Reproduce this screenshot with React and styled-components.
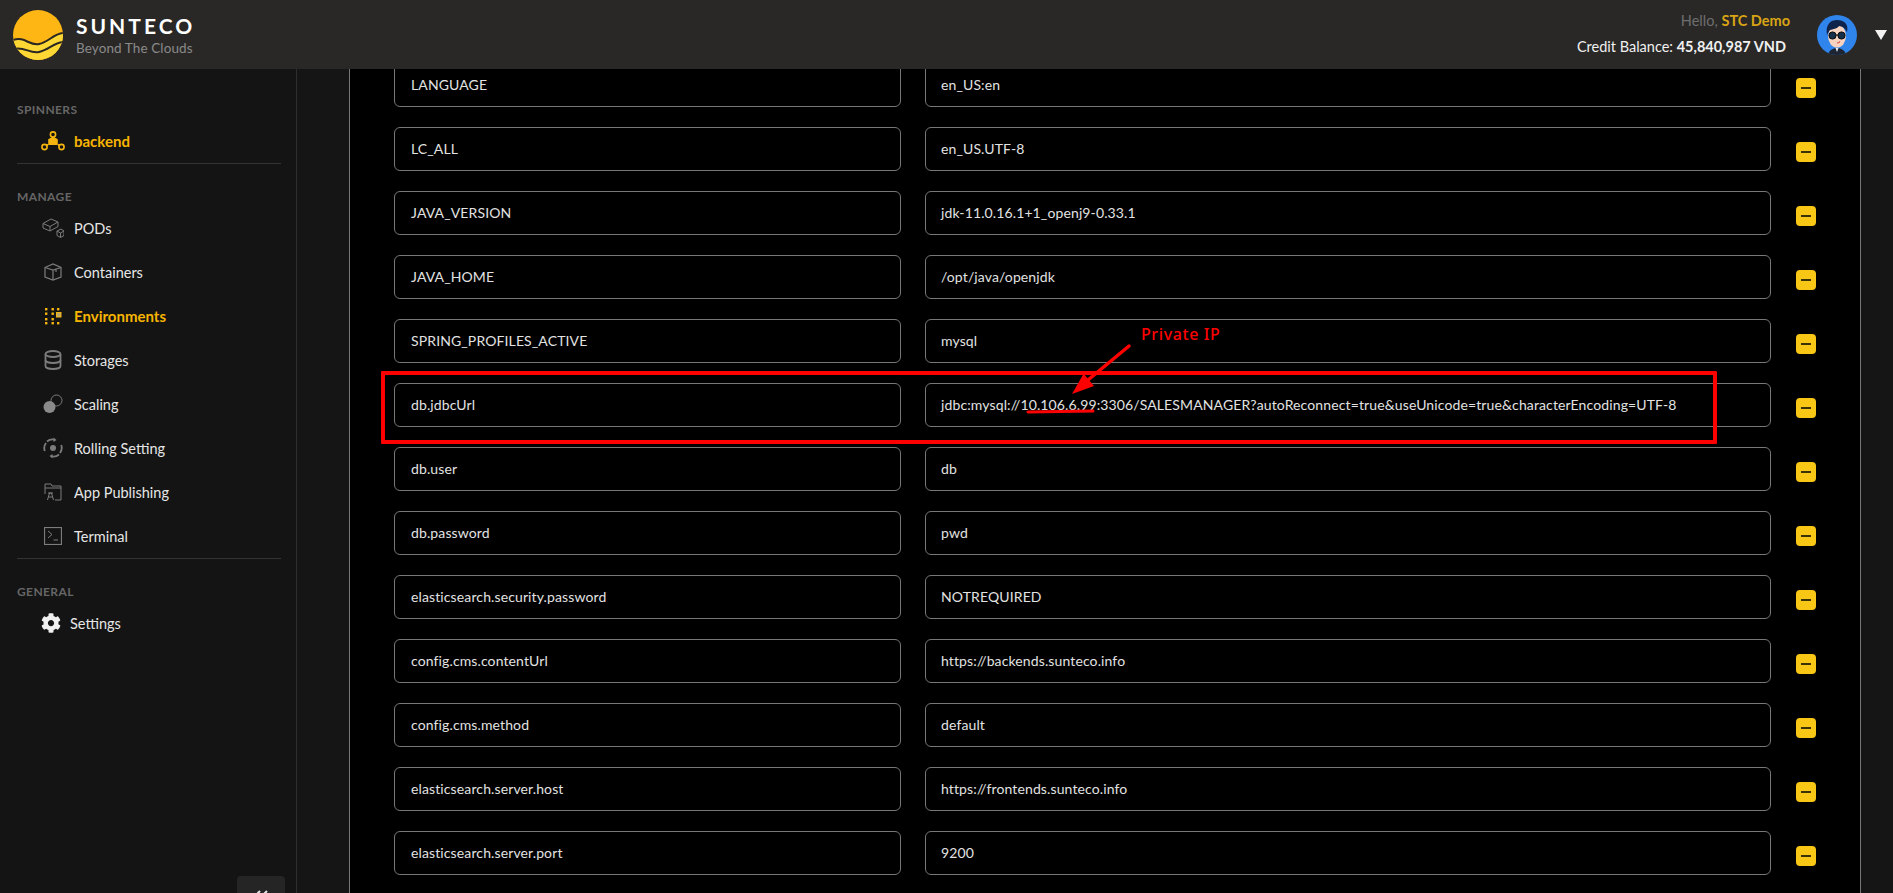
import styled, { createGlobalStyle } from "styled-components";
import { FaCog } from "react-icons/fa";

const GlobalStyle = createGlobalStyle`
  html, body {
    margin: 0;
    height: 100%;
    background: #151515;
    font-family: "Lato", "Noto Sans", sans-serif;
  }
  * {
    box-sizing: border-box;
  }
`;

const Page = styled.div`
  display: flex;
  flex-direction: column;
  height: 100vh;
  overflow: hidden;
`;

// Header
const TopBar = styled.header`
  display: flex;
  align-items: center;
  justify-content: space-between;
  flex: 0 0 69px;
  padding: 0 6px 0 13px;
  background: #292827;
`;

const Brand = styled.div`
  display: flex;
  align-items: center;
  gap: 13px;
`;

const BrandText = styled.div`
  display: flex;
  flex-direction: column;
`;

const BrandName = styled.div`
  font-size: 21px;
  line-height: 26px;
  font-weight: 700;
  letter-spacing: 3px;
  color: #fff;
`;

const BrandSlogan = styled.div`
  font-size: 13.5px;
  line-height: 18px;
  letter-spacing: 0.1px;
  color: #8a8a8a;
`;

const UserArea = styled.div`
  display: flex;
  align-items: center;
`;

const UserText = styled.div`
  display: flex;
  flex-direction: column;
  align-items: flex-end;
  gap: 8px;
  margin: 0 31px 1px 0;
  font-size: 14.5px;
  line-height: 18px;
`;

const Hello = styled.div`
  margin-right: -4px;
  color: #6e6e6e;
`;

const UserName = styled.span`
  color: #d9a514;
  font-weight: 700;
`;

const Credit = styled.div`
  color: #f0f0f0;
`;

const CreditValue = styled.b`
  font-weight: 700;
`;

const Caret = styled.div`
  width: 0;
  height: 0;
  margin-left: 18px;
  border-left: 6.5px solid transparent;
  border-right: 6.5px solid transparent;
  border-top: 10px solid #f2f2f2;
`;

// Sidebar
const Body = styled.div`
  display: flex;
  flex: 1;
  min-height: 0;
`;

const Sidebar = styled.aside`
  display: flex;
  flex-direction: column;
  flex: 0 0 297px;
  padding: 33px 15px 0 17px;
  background: #141414;
  border-right: 1px solid #2e2e2e;
`;

const SectionLabel = styled.div`
  font-size: 12px;
  line-height: 16px;
  font-weight: 700;
  letter-spacing: 0.4px;
  color: #666;
`;

const NavList = styled.nav`
  display: flex;
  flex-direction: column;
  margin-top: 1px;
`;

const NavItem = styled.div`
  display: flex;
  align-items: center;
  height: 44px;
  padding-left: 24px;
  gap: 9px;
  font-size: ${(p) => (p.$active ? "15px" : "14.5px")};
  font-weight: ${(p) => (p.$active ? 700 : 400)};
  color: ${(p) => (p.$active ? "#f8b400" : "#e6e6e6")};
`;

const NavIcon = styled.span`
  display: flex;
  align-items: center;
  justify-content: center;
  width: 24px;
  height: 24px;
  color: ${(p) => (p.$active ? "#f5b50f" : "#7c7c7c")};
`;

const SettingsIcon = styled(NavIcon)`
  width: 20px;
  color: #f0f0f0;
`;

const Divider = styled.div`
  height: 1px;
  margin: ${(p) => p.$margin || "0"};
  background: #333;
`;

const CollapseButton = styled.div`
  display: flex;
  justify-content: center;
  align-self: flex-end;
  margin-top: auto;
  margin-right: -4px;
  padding-top: 14px;
  width: 48px;
  height: 17px;
  overflow: hidden;
  border-radius: 4px 4px 0 0;
  background: #252525;
  color: #e8e8e8;
`;

// Content
const Content = styled.main`
  flex: 1;
  min-width: 0;
  padding: 0 32px 0 52px;
  background: #151515;
`;

const Panel = styled.section`
  position: relative;
  height: 100%;
  overflow: hidden;
  padding-left: 44px;
  background: #000;
  border-left: 1px solid #777;
  border-right: 1px solid #777;
`;

const RowList = styled.div`
  display: flex;
  flex-direction: column;
  gap: 20px;
  margin-top: -6px;
`;

const Row = styled.div`
  display: grid;
  grid-template-columns: 507px 846px 20px;
  column-gap: 24px;
`;

const Field = styled.div`
  display: flex;
  align-items: center;
  height: 44px;
  padding: 0 15px 2px;
  border: 1px solid #777;
  border-radius: 6px;
  font-size: 14px;
  letter-spacing: 0.12px;
  color: #e2e2e2;
  white-space: nowrap;
`;

const NameField = styled(Field)`
  padding-left: 16px;
`;

const RemoveButton = styled.button`
  display: flex;
  align-items: center;
  justify-content: center;
  align-self: center;
  width: 20px;
  height: 20px;
  margin: 5px 0 0 1px;
  padding: 0;
  border: 0;
  border-radius: 4px;
  background: #f8c715;
`;

const RemoveBar = styled.span`
  width: 10px;
  height: 2px;
  background: #3a3205;
`;

const HighlightBox = styled.div`
  position: absolute;
  left: 31px;
  top: 302px;
  width: 1336px;
  height: 73px;
  border: 4px solid #f00;
  border-radius: 1px;
  pointer-events: none;
`;

const Marks = styled.svg`
  position: absolute;
  left: 660px;
  top: 260px;
  pointer-events: none;
`;

const MarkLabel = styled.div`
  position: absolute;
  left: 791px;
  top: 254px;
  font-family: "Noto Sans", sans-serif;
  font-size: 16px;
  line-height: 22px;
  font-weight: 500;
  letter-spacing: 0.6px;
  color: #f00;
`;

const Logo = () => (
  <svg width="50" height="50" viewBox="0 0 50 50">
    <defs>
      <clipPath id="sun">
        <circle cx="25" cy="25" r="25" />
      </clipPath>
    </defs>
    <g clipPath="url(#sun)">
      <rect width="50" height="50" fill="#fdb614" />
      <path d="M0 30C12 26 16 36 26 34S40 24 50 23V50H0Z" fill="#fdd835" />
      <path d="M0 30C12 26 16 36 26 34S40 24 50 23" fill="none" stroke="#2b2722" strokeWidth="2" />
      <path d="M0 39C12 36 16 44 26 42S40 33 50 32" fill="none" stroke="#2b2722" strokeWidth="2" />
    </g>
  </svg>
);

const Avatar = () => (
  <svg width="40" height="40" viewBox="0 0 40 40">
    <defs>
      <clipPath id="avatar">
        <circle cx="20" cy="20" r="20" />
      </clipPath>
    </defs>
    <g clipPath="url(#avatar)">
      <rect width="40" height="40" fill="#2f85ec" />
      <path d="M11 40c1-5 5-7 9-7s8 2 9 7Z" fill="#1d2533" />
      <path d="M18.500 33h3l-1.500 4Z" fill="#e9eef5" />
      <ellipse cx="20" cy="21" rx="9" ry="11.500" fill="#f7d3c0" />
      <path d="M10 20C8 9 14 5 20 5c7 0 12 4 10 12-2-4-5-6-8-6-2 3-6 3-9 4-1 1-2 3-3 5Z" fill="#10234a" />
      <circle cx="15.500" cy="20.500" r="3.600" fill="#16304a" stroke="#0a0a0a" />
      <circle cx="24.500" cy="20.500" r="3.600" fill="#16304a" stroke="#0a0a0a" />
      <path d="M19 20h2" stroke="#0a0a0a" />
      <path d="M20 28c1.500 0 2.500-.5 3-1.500" fill="none" stroke="#d8423f" strokeWidth="1.200" />
    </g>
  </svg>
);

const BackendIcon = () => (
  <svg width="24" height="20" viewBox="0 0 24 20" fill="none" stroke="currentColor" strokeWidth="1.600">
    <path d="M12 6.500l4 2.300v4.500H8V8.800Z" fill="currentColor" />
    <circle cx="12" cy="3.500" r="2.600" />
    <circle cx="3.500" cy="16" r="2.600" />
    <circle cx="20.500" cy="16" r="2.600" />
    <path d="M7 13.500l-1.500 1M17 13.500l1.500 1" />
  </svg>
);

const PodsIcon = () => (
  <svg width="22" height="22" viewBox="0 0 22 22" fill="none" stroke="currentColor" strokeWidth="1">
    <path d="M1 6.500L9 2l7 3v4.500L8 14l-7-3Z" />
    <path d="M1 6.500L8 9.500l8-4.500M8 9.500V14" />
    <path d="M15 14l4-2 3 2v4.500l-3.500 2-3.500-2Z" />
    <path d="M15 14l3.500 2 3.500-2M18.500 16v4.500" />
  </svg>
);

const ContainerIcon = () => (
  <svg width="18" height="18" viewBox="0 0 18 18" fill="none" stroke="currentColor" strokeWidth="1.200">
    <path d="M1 4.500L9 1l8 3.500v9.500L9 17l-8-3Z" />
    <path d="M1 4.500L9 7l8-2.500M9 7v10M12 6v3" />
  </svg>
);

const EnvIcon = () => (
  <svg width="18" height="18" viewBox="0 0 18 18" fill="currentColor">
    <rect x="1" y="1" width="2.400" height="2.400" />
    <rect x="7.500" y="1" width="2.400" height="2.400" />
    <rect x="13" y="1" width="2.400" height="2.400" />
    <rect x="1" y="5.500" width="2.400" height="2.400" />
    <rect x="7.500" y="5.500" width="2.400" height="2.400" />
    <rect x="12.500" y="5.500" width="4.500" height="4.500" fill="#b9a76a" stroke="currentColor" strokeWidth="1" />
    <rect x="1" y="11" width="2.400" height="2.400" />
    <rect x="7.500" y="11" width="2.400" height="2.400" />
    <rect x="1" y="15" width="2.400" height="2.400" />
    <rect x="7.500" y="15" width="2.400" height="2.400" />
    <rect x="13" y="15" width="2.400" height="2.400" />
  </svg>
);

const StorageIcon = () => (
  <svg width="18" height="20" viewBox="0 0 18 20" fill="none" stroke="currentColor" strokeWidth="1.800">
    <ellipse cx="9" cy="4" rx="7.500" ry="3" />
    <path d="M1.500 4v12c0 1.700 3.400 3 7.500 3s7.500-1.300 7.500-3V4" />
    <path d="M1.500 10c0 1.700 3.400 3 7.500 3s7.500-1.300 7.500-3" />
  </svg>
);

const ScalingIcon = () => (
  <svg width="20" height="20" viewBox="0 0 20 20">
    <circle cx="13.500" cy="6.500" r="5.500" fill="none" stroke="currentColor" strokeWidth="1" />
    <circle cx="6.500" cy="13" r="6" fill="#8a8a8a" />
  </svg>
);

const RollingIcon = () => (
  <svg width="20" height="22" viewBox="0 0 20 22" fill="none" stroke="currentColor" strokeWidth="1.800">
    <path d="M4 4.500A8.500 8.500 0 0 1 12 2.800M16 17.500A8.500 8.500 0 0 1 8 19.200" />
    <path d="M1.800 14A8.500 8.500 0 0 1 3 6M18.200 8A8.500 8.500 0 0 1 17 16" />
    <path d="M10.500 0.500l3 2.400-3 2zM9.500 21.500l-3-2.400 3-2z" fill="currentColor" stroke="none" />
    <circle cx="10" cy="11" r="3" fill="currentColor" stroke="none" />
  </svg>
);

const PublishIcon = () => (
  <svg width="18" height="18" viewBox="0 0 18 18" fill="none" stroke="currentColor" strokeWidth="1">
    <path d="M1 11V1h6l1 2h9v14h-6M1 5h16" />
    <path d="M3.500 17l2-7h2l2 7M4.500 14h4M4 10h5" />
  </svg>
);

const TerminalIcon = () => (
  <svg width="18" height="18" viewBox="0 0 18 18" fill="none" stroke="currentColor" strokeWidth="1">
    <rect x="0.500" y="0.500" width="17" height="17" strokeWidth="1.200" />
    <path d="M4 4l4 3.500L4 11M9.500 13H14" />
  </svg>
);

const CollapseIcon = () => (
  <svg width="14" height="12" viewBox="0 0 14 12" fill="none" stroke="currentColor" strokeWidth="2" style={{ flex: "none" }}>
    <path d="M6 1L1 6l5 5M13 1L8 6l5 5" />
  </svg>
);

const envRows = [
  ["LANGUAGE", "en_US:en"],
  ["LC_ALL", "en_US.UTF-8"],
  ["JAVA_VERSION", "jdk-11.0.16.1+1_openj9-0.33.1"],
  ["JAVA_HOME", "/opt/java/openjdk"],
  ["SPRING_PROFILES_ACTIVE", "mysql"],
  ["db.jdbcUrl", "jdbc:mysql://10.106.6.99:3306/SALESMANAGER?autoReconnect=true&useUnicode=true&characterEncoding=UTF-8"],
  ["db.user", "db"],
  ["db.password", "pwd"],
  ["elasticsearch.security.password", "NOTREQUIRED"],
  ["config.cms.contentUrl", "https://backends.sunteco.info"],
  ["config.cms.method", "default"],
  ["elasticsearch.server.host", "https://frontends.sunteco.info"],
  ["elasticsearch.server.port", "9200"],
];

const manageItems = [
  { label: "PODs", icon: <PodsIcon /> },
  { label: "Containers", icon: <ContainerIcon /> },
  { label: "Environments", icon: <EnvIcon />, active: true },
  { label: "Storages", icon: <StorageIcon /> },
  { label: "Scaling", icon: <ScalingIcon /> },
  { label: "Rolling Setting", icon: <RollingIcon /> },
  { label: "App Publishing", icon: <PublishIcon /> },
  { label: "Terminal", icon: <TerminalIcon /> },
];

export default function App() {
  return (
    <Page>
      <GlobalStyle />
      <TopBar>
        <Brand>
          <Logo />
          <BrandText>
            <BrandName>SUNTECO</BrandName>
            <BrandSlogan>Beyond The Clouds</BrandSlogan>
          </BrandText>
        </Brand>
        <UserArea>
          <UserText>
            <Hello>
              Hello, <UserName>STC Demo</UserName>
            </Hello>
            <Credit>
              Credit Balance: <CreditValue>45,840,987 VND</CreditValue>
            </Credit>
          </UserText>
          <Avatar />
          <Caret />
        </UserArea>
      </TopBar>
      <Body>
        <Sidebar>
          <SectionLabel>SPINNERS</SectionLabel>
          <NavList>
            <NavItem $active>
              <NavIcon $active>
                <BackendIcon />
              </NavIcon>
              backend
            </NavItem>
          </NavList>
          <Divider $margin="0 0 25px" />
          <SectionLabel>MANAGE</SectionLabel>
          <NavList>
            {manageItems.map((item) => (
              <NavItem key={item.label} $active={item.active}>
                <NavIcon $active={item.active}>{item.icon}</NavIcon>
                {item.label}
              </NavItem>
            ))}
          </NavList>
          <Divider $margin="0 0 25px" />
          <SectionLabel>GENERAL</SectionLabel>
          <NavList>
            <NavItem>
              <SettingsIcon>
                <FaCog size={20} />
              </SettingsIcon>
              Settings
            </NavItem>
          </NavList>
          <CollapseButton>
            <CollapseIcon />
          </CollapseButton>
        </Sidebar>
        <Content>
          <Panel>
            <RowList>
              {envRows.map(([name, value]) => (
                <Row key={name}>
                  <NameField>{name}</NameField>
                  <Field>{value}</Field>
                  <RemoveButton type="button" aria-label="Remove">
                    <RemoveBar />
                  </RemoveButton>
                </Row>
              ))}
            </RowList>
            <HighlightBox />
            <Marks width="180" height="90" viewBox="0 0 180 90">
              <path d="M18 83L83 82" stroke="#f00" strokeWidth="3" strokeLinecap="round" />
              <path d="M119 17L78 51" stroke="#f00" strokeWidth="3.500" strokeLinecap="round" />
              <path d="M62 65L84 57L73.600 44.700Z" fill="#f00" />
            </Marks>
            <MarkLabel>Private IP</MarkLabel>
          </Panel>
        </Content>
      </Body>
    </Page>
  );
}
